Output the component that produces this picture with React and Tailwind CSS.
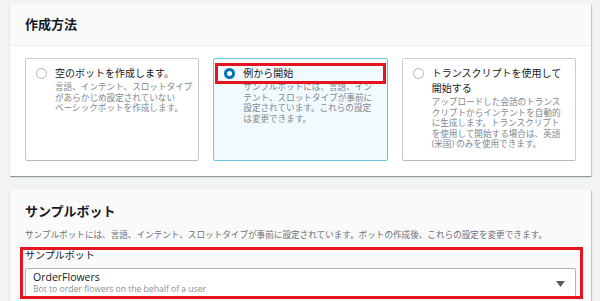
import { useState } from 'react';

const font = { fontFamily: '"Open Sans", "Noto Sans CJK JP", sans-serif' };

const methods = [
  {
    id: 'blank',
    title: ['空のボットを作成します。'],
    desc: ['言語、インテント、スロットタイプ', 'があらかじめ設定されていない', 'ベーシックボットを作成します。'],
  },
  {
    id: 'example',
    title: ['例から開始'],
    desc: ['サンプルボットには、言語、イン', 'テント、スロットタイプが事前に', '設定されています。これらの設定', 'は変更できます。'],
  },
  {
    id: 'transcript',
    title: ['トランスクリプトを使用して', '開始する'],
    desc: [
      'アップロードした会話のトランス',
      'クリプトからインテントを自動的',
      'に生成します。トランスクリプト',
      'を使用して開始する場合は、英語',
      '(米国) のみを使用できます。',
    ],
  },
];

function Radio({ checked }) {
  if (checked) {
    return <span className="mt-[2px] h-[11px] w-[11px] shrink-0 rounded-full border-[3px] border-[#0073bb] bg-white" />;
  }
  return <span className="mt-[2px] h-[11px] w-[11px] shrink-0 rounded-full border border-[#aab7b8] bg-white" />;
}

function MethodCard({ item, selected, onSelect }) {
  return (
    <div
      onClick={onSelect}
      className={
        selected
          ? 'relative h-[103px] rounded-[2px] border border-[#6cc4de] bg-[#f1faff] pl-[10px] pr-2 pt-[7px] cursor-pointer'
          : 'relative h-[103px] rounded-[2px] border border-[#c6cccc] border-b-[#b5bcbd] bg-white pl-[10px] pr-2 pt-[7px] cursor-pointer'
      }
    >
      <div className="flex gap-[8px]">
        <Radio checked={selected} />
        <div>
          <div className="text-[10px] leading-[15px] text-[#16191f]">
            {item.title.map((t) => (
              <div key={t} className="whitespace-nowrap">{t}</div>
            ))}
          </div>
          <div className="mt-[1px] text-[8.6px] leading-[10.5px] text-[#7d868c]">
            {item.desc.map((t) => (
              <div key={t} className="whitespace-nowrap">{t}</div>
            ))}
          </div>
        </div>
      </div>
    </div>
  );
}

export default function App() {
  const [method, setMethod] = useState('example');

  return (
    <div style={font} className="relative h-[301px] w-[600px] overflow-hidden bg-[#f2f3f3] pl-[10px] pt-[4px]">
      {/* 作成方法 */}
      <div className="w-[581px] bg-white shadow-[0_1px_1px_0_rgba(0,28,36,0.3),1px_1px_1px_0_rgba(0,28,36,0.15)]">
        <div className="flex h-[42px] items-center border-b border-[#eaeded] bg-[#fafafa] px-[15px]">
          <h2 className="text-[13px] font-bold text-[#16191f]">作成方法</h2>
        </div>
        <div className="grid grid-cols-3 gap-[14px] px-[15px] pb-[15px] pt-[12px]">
          {methods.map((m) => (
            <MethodCard key={m.id} item={m} selected={method === m.id} onSelect={() => setMethod(m.id)} />
          ))}
        </div>
      </div>

      {/* サンプルボット */}
      <div className="mt-[14px] h-[120px] w-[581px] bg-[#fafafa] px-[15px] pt-[12px] shadow-[0_1px_1px_0_rgba(0,28,36,0.3),1px_1px_1px_0_rgba(0,28,36,0.15)]">
        <h2 className="text-[13px] font-bold leading-[18px] text-[#16191f]">サンプルボット</h2>
        <p className="mt-[9px] whitespace-nowrap text-[8.6px] leading-[12px] text-[#687078]">
          サンプルボットには、言語、インテント、スロットタイプが事前に設定されています。ボットの作成後、これらの設定を変更できます。
        </p>
        <div className="mt-[7px] text-[10px] leading-[14px] text-[#16191f]">サンプルボット</div>
        <div className="mt-[6px] flex h-[29px] items-center justify-between rounded-[2px] border border-[#aab7b8] bg-white pl-[7px] pr-[10px]">
          <div>
            <div className="text-[10.5px] leading-[13px] text-[#16191f]">OrderFlowers</div>
            <div className="text-[8.6px] leading-[11px] text-[#879196]">Bot to order flowers on the behalf of a user</div>
          </div>
          <svg width="9" height="6" viewBox="0 0 9 6" className="mt-[2px]">
            <path d="M0 0 L9 0 L4.5 6 Z" fill="#545b64" />
          </svg>
        </div>
      </div>

      {/* annotation boxes */}
      <div className="pointer-events-none absolute left-[215px] top-[63px] h-[21px] w-[171px] border-[3px] border-[#e5141f]" />
      <div className="pointer-events-none absolute left-[20px] top-[247px] h-[52px] w-[563px] border-[3px] border-[#e5141f]" />
    </div>
  );
}
